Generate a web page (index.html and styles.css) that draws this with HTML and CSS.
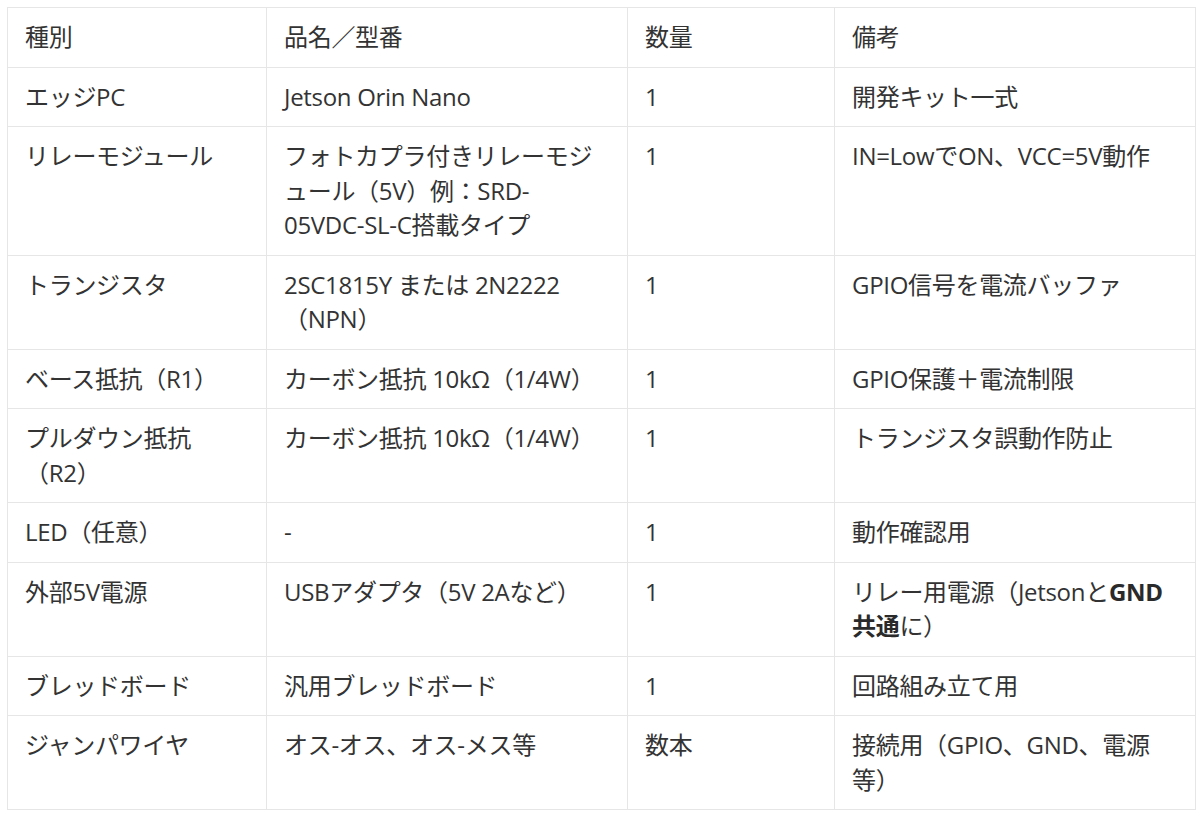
FILE: index.html
```html
<!DOCTYPE html>
<html lang="ja">
<head>
<meta charset="utf-8">
<title>部品表</title>
<link rel="stylesheet" href="styles.css">
</head>
<body>
<table class="parts">
  <colgroup>
    <col class="c-type">
    <col class="c-name">
    <col class="c-qty">
    <col class="c-note">
  </colgroup>
  <thead>
    <tr><th>種別</th><th>品名／型番</th><th>数量</th><th>備考</th></tr>
  </thead>
  <tbody>
    <tr><td>エッジPC</td><td>Jetson Orin Nano</td><td>1</td><td>開発キット一式</td></tr>
    <tr><td>リレーモジュール</td><td>フォトカプラ付きリレーモジュール（5V）例：SRD-<wbr><span class="nobr">05VDC-SL-C</span>搭載タイプ</td><td>1</td><td>IN=LowでON、VCC=5V動作</td></tr>
    <tr><td>トランジスタ</td><td>2SC1815Y または 2N2222（NPN）</td><td>1</td><td>GPIO信号を電流バッファ</td></tr>
    <tr><td>ベース抵抗（R1）</td><td>カーボン抵抗 10kΩ（1/4W）</td><td>1</td><td>GPIO保護＋電流制限</td></tr>
    <tr><td>プルダウン抵抗（R2）</td><td>カーボン抵抗 10kΩ（1/4W）</td><td>1</td><td>トランジスタ誤動作防止</td></tr>
    <tr><td>LED（任意）</td><td>-</td><td>1</td><td>動作確認用</td></tr>
    <tr><td>外部5V電源</td><td>USBアダプタ（5V 2Aなど）</td><td>1</td><td>リレー用電源（Jetsonと<strong>GND</strong><strong>共通</strong>に）</td></tr>
    <tr><td>ブレッドボード</td><td>汎用ブレッドボード</td><td>1</td><td>回路組み立て用</td></tr>
    <tr><td>ジャンパワイヤ</td><td>オス-オス、オス-メス等</td><td>数本</td><td>接続用（GPIO、GND、電源等）</td></tr>
  </tbody>
</table>
</body>
</html>
```

FILE: styles.css
```css
html, body {
  margin: 0;
  padding: 0;
  background: #ffffff;
}

body {
  padding: 7px 6px 6px 7px;
  font-family: "Open Sans", "Noto Sans CJK JP", sans-serif;
  font-size: 24px;
  letter-spacing: -0.3px;
  font-weight: 400;
  color: #333333;
}

.parts {
  width: 1188px;
  border-collapse: collapse;
  table-layout: fixed;
}

.c-type { width: 259px; }
.c-name { width: 361px; }
.c-qty { width: 207px; }
.c-note { width: 361px; }

.parts th,
.parts td {
  border: 1px solid #e6e6e6;
  padding: 12px 16px 12px 17px;
  line-height: 34.5px;
  text-align: left;
  vertical-align: top;
  font-weight: 400;
}

.nobr {
  white-space: nowrap;
}

.parts strong {
  font-weight: 700;
  color: #2a2a2a;
}
```
